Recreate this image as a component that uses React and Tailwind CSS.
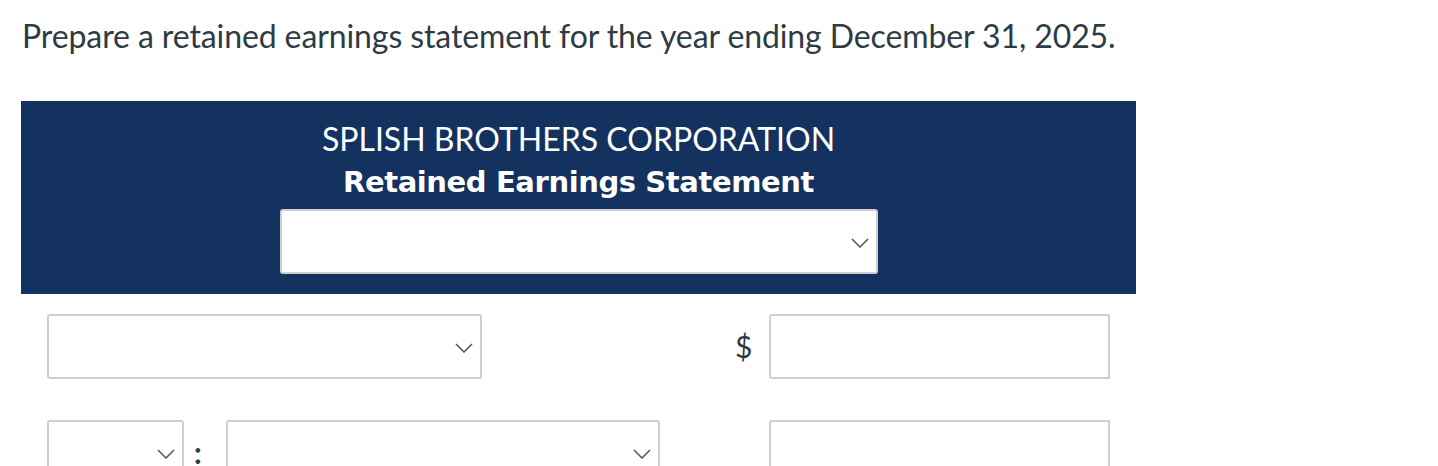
const font = { fontFamily: "Lato, 'Open Sans', sans-serif" };

const Chevron = () => (
  <svg width="18" height="10" viewBox="0 0 18 10" fill="none" className="shrink-0">
    <polyline points="1,1 9,9 17,1" stroke="#5a5a5a" strokeWidth="1.6" />
  </svg>
);

const Select = ({ className = "" }) => (
  <div
    className={`flex h-[65px] items-center justify-end rounded-[3px] border-2 border-[#cfcfcf] bg-white pr-[7px] pt-[2px] ${className}`}
  >
    <Chevron />
  </div>
);

const Input = () => (
  <div className="h-[65px] w-[341px] rounded-l-[3px] border-2 border-[#cfcfcf] bg-white" />
);

export default function App() {
  return (
    <div className="h-[466px] w-[1438px] overflow-hidden bg-white text-[#2d3b45]" style={font}>
      <h1 className="pl-[22px] pt-[16px] text-[32px] leading-[40px] font-normal tracking-[-0.1px]">
        Prepare a retained earnings statement for the year ending December 31, 2025.
      </h1>

      <div className="ml-[21px] mt-[45px] w-[1115px]">
        {/* header */}
        <div className="flex flex-col items-center bg-[#13325f] pt-[18px] pb-[20px] text-white">
          <div className="text-[32px] leading-[40px]">SPLISH BROTHERS CORPORATION</div>
          <div className="font-['DejaVu_Sans',sans-serif] text-[29px] leading-[46px] font-bold tracking-[-0.4px]">
            Retained Earnings Statement
          </div>
          <Select className="mt-[4px] w-[598px]" />
        </div>

        {/* rows */}
        <div className="flex flex-col gap-[41px] pt-[20px] pl-[26px]">
          <div className="flex items-center">
            <Select className="w-[435px]" />
            <span className="ml-[253px] w-[34px] text-[30px]">$</span>
            <Input />
          </div>
          <div className="flex items-start">
            <Select className="w-[137px]" />
            <span className="flex w-[42px] justify-start pl-[10px] pt-[12px] text-[30px] leading-[40px] font-bold">:</span>
            <Select className="w-[434px]" />
            <span className="w-[109px]" />
            <Input />
          </div>
        </div>
      </div>
    </div>
  );
}
